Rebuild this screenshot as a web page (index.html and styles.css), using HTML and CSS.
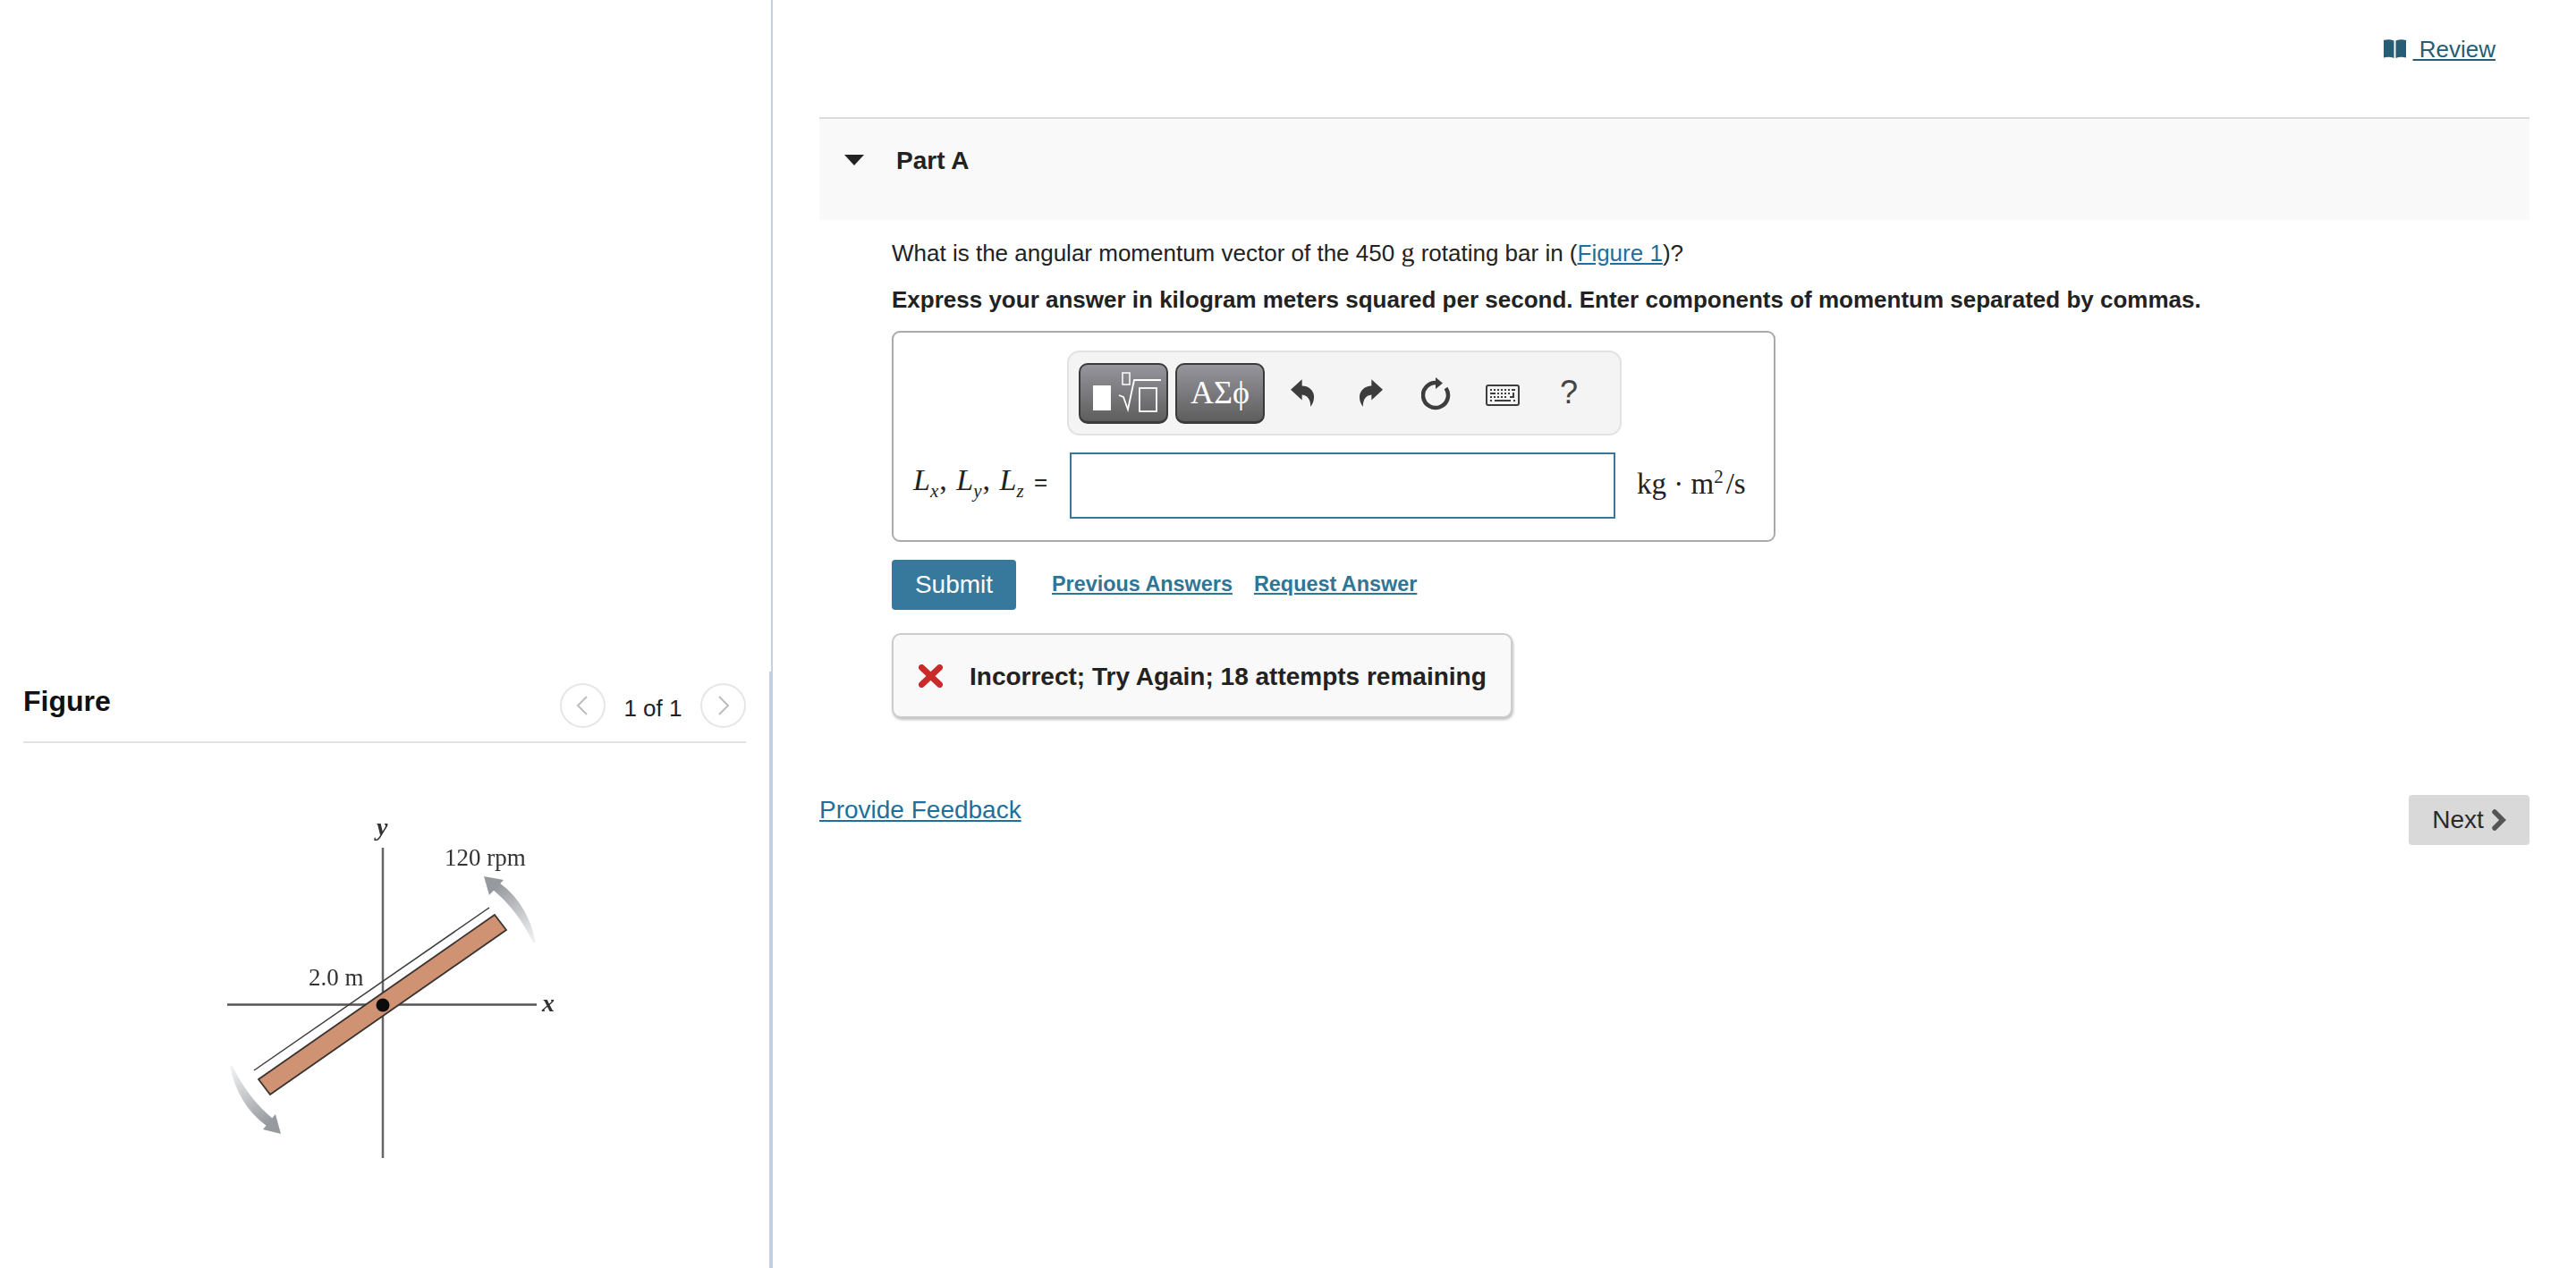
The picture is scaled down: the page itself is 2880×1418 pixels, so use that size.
FILE: index.html
```html
<!DOCTYPE html>
<html lang="en">
<head>
<meta charset="utf-8">
<title>Part A</title>
<link rel="stylesheet" href="styles.css">
</head>
<body>
<main class="page">
  <aside class="figure-pane">
    <div class="figure-region">
      <div class="figure-head">
        <h2 class="figure-title">Figure</h2>
        <div class="figure-nav">
          <button class="nav-btn" type="button" aria-label="Previous"><svg width="14" height="24" viewBox="0 0 14 24"><path d="M12 2 2 12l10 10" fill="none" stroke="#bdbdbd" stroke-width="2"/></svg></button>
          <span class="nav-count">1 of 1</span>
          <button class="nav-btn" type="button" aria-label="Next"><svg width="14" height="24" viewBox="0 0 14 24"><path d="M2 2l10 10L2 22" fill="none" stroke="#bdbdbd" stroke-width="2"/></svg></button>
        </div>
      </div>
      <svg class="diagram" width="400" height="410" viewBox="0 0 400 410">
        <defs>
          <linearGradient id="fadeUp" gradientUnits="userSpaceOnUse" x1="358" y1="155" x2="315" y2="90">
            <stop offset="0" stop-color="#f4f5f6"/><stop offset="1" stop-color="#96999d"/>
          </linearGradient>
          <linearGradient id="fadeDown" gradientUnits="userSpaceOnUse" x1="18" y1="291" x2="61" y2="356">
            <stop offset="0" stop-color="#f4f5f6"/><stop offset="1" stop-color="#96999d"/>
          </linearGradient>
        </defs>
        <line x1="188" y1="48" x2="188" y2="395" stroke="#666" stroke-width="2.5"/>
        <line x1="14" y1="223.500" x2="360" y2="223.500" stroke="#555" stroke-width="2.5"/>
        <line x1="44" y1="297" x2="307" y2="115" stroke="#3c3c3c" stroke-width="1.500"/>
        <polygon points="313,123 326,140 62,324 49,307" fill="#cf9272" stroke="#3a3330" stroke-width="1.800"/>
        <circle cx="188" cy="224" r="7.500" fill="#0c0c0c"/>
        <path d="M359 154Q350 110 318 87L311 95Q339 118 356 154Z" fill="url(#fadeUp)"/>
        <polygon points="301,80 323,84 307,101" fill="#96999d"/>
        <path d="M17 292Q26 336 58 359L65 351Q37 328 20 292Z" fill="url(#fadeDown)"/>
        <polygon points="74,368 68,346 54,363" fill="#96999d"/>
        <text class="fig-label fig-axis" x="181" y="34">y</text>
        <text class="fig-label" x="257" y="68">120 rpm</text>
        <text class="fig-label" x="105" y="202">2.0 m</text>
        <text class="fig-label fig-axis" x="366" y="231">x</text>
      </svg>
    </div>
  </aside>

  <section class="work-pane">
    <div class="review-row">
      <a class="review-link" href="#">
        <svg class="book" width="25" height="21" viewBox="0 0 25 21"><path d="M0 1C4-.2 8 0 11.500 1.500V21C8 19.500 4 19.500 0 20.500Z M13.500 1.500C17 0 21-.2 25 1V20.500C21 19.500 17 19.500 13.500 21Z" fill="#265e75"/></svg>
        <span class="review-text">&nbsp;Review</span>
      </a>
    </div>

    <header class="part-head">
      <span class="caret"></span>
      <h3 class="part-title">Part A</h3>
    </header>

    <div class="part-body">
      <p class="question">What is the angular momentum vector of the 450 <span class="unit-g">g</span> rotating bar in (<a href="#" class="fig-link">Figure 1</a>)?</p>
      <p class="instruction">Express your answer in kilogram meters squared per second. Enter components of momentum separated by commas.</p>

      <div class="answer-box">
        <div class="toolbar">
          <button class="tool-btn" type="button" aria-label="Templates">
            <svg width="96" height="64" viewBox="0 0 96 64"><rect x="14" y="24" width="20" height="28" fill="#fff"/><rect x="47" y="10" width="8" height="13" fill="none" stroke="#fff" stroke-width="1.500"/><path d="M43 35l5 2 5 14 7-33h30" fill="none" stroke="#fff" stroke-width="1.800"/><rect x="66" y="27" width="19" height="26" fill="none" stroke="#fff" stroke-width="1.800"/></svg>
          </button>
          <button class="tool-btn tool-greek" type="button">ΑΣϕ</button>
          <span class="tool-icon tool-undo"><svg width="26" height="31" viewBox="0 0 78 92"><path d="M0 35 38 0V22C62 22 80 40 78 62 78 74 72 86 66 92 68 74 60 54 38 52V70Z" fill="#3d3d3d"/></svg></span>
          <span class="tool-icon tool-redo"><svg width="26" height="31" viewBox="0 0 78 92"><path d="M78 35 40 0V22C16 22-2 40 0 62 0 74 6 86 12 92 10 74 18 54 40 52V70Z" fill="#3d3d3d"/></svg></span>
          <span class="tool-icon tool-reset"><svg width="33" height="37" viewBox="0 0 33 37"><path d="M17 6A14 14 0 1 0 27.500 12" fill="none" stroke="#3d3d3d" stroke-width="4.500"/><polygon points="16,0 24,6.500 16,13" fill="#3d3d3d"/></svg></span>
          <span class="tool-icon tool-keys"><svg width="38" height="24" viewBox="0 0 38 24"><rect x="1" y="1" width="36" height="22" rx="2" fill="none" stroke="#3d3d3d" stroke-width="2"/><path d="M5 6h2M9 6h2M13 6h2M17 6h2M21 6h2M25 6h2M29 6h4M5 10h6M13 10h2M17 10h2M21 10h2M25 10h2M31 9v5H27M5 14h2M9 14h2M13 14h2M17 14h2M21 14h2M5 18h2M10 18h18M31 18h2" stroke="#3d3d3d" stroke-width="2" fill="none"/></svg></span>
          <span class="tool-help">?</span>
        </div>
        <div class="answer-row">
          <span class="math-label"><i>L</i><sub>x</sub>, <i>L</i><sub>y</sub>, <i>L</i><sub>z</sub> <span class="equals">=</span></span>
          <input class="answer-input" type="text" aria-label="Answer">
          <span class="math-unit">kg · m<sup>2</sup><span class="slash">/</span>s</span>
        </div>
      </div>

      <div class="action-row">
        <button class="submit-btn" type="button">Submit</button>
        <a class="action-link" href="#">Previous Answers</a>
        <a class="action-link" href="#">Request Answer</a>
      </div>

      <div class="feedback-box">
        <svg class="feedback-x" width="27" height="26" viewBox="0 0 27 26"><path d="M3.500 3.500 23.500 22.500M23.500 3.500 3.500 22.500" stroke="#c92a2a" stroke-width="7" stroke-linecap="round"/></svg>
        <span class="feedback-text">Incorrect; Try Again; 18 attempts remaining</span>
      </div>
    </div>

    <footer class="pane-foot">
      <a class="feedback-link" href="#">Provide Feedback</a>
      <button class="next-btn" type="button">Next <svg width="16" height="24" viewBox="0 0 16 24"><path d="M3 3l9 9-9 9" fill="none" stroke="#555" stroke-width="5.500" stroke-linecap="round"/></svg></button>
    </footer>
  </section>
</main>
</body>
</html>
```

FILE: styles.css
```css
* { box-sizing: border-box; }
html, body { margin: 0; height: 100%; background: #fff; }
body { font-family: "Liberation Sans", Arial, sans-serif; color: #222; overflow: hidden; }
button { font-family: inherit; }
a { color: #2b7095; }

.page { display: flex; height: 1418px; }

.figure-pane { width: 864px; flex: none; padding-top: 751px; border-right: 2px solid #c3d0e0; }
.figure-region { height: 667px; padding: 0 26px; border-right: 2px solid #c3d0e0; }
.figure-head { display: flex; justify-content: space-between; align-items: flex-start; height: 80px; border-bottom: 2px solid #dfe1e3; }
.figure-title { margin: 13px 0 0; font-size: 32px; font-weight: 700; line-height: 40px; color: #111; }
.figure-nav { display: flex; align-items: flex-start; gap: 20.5px; margin-top: 13px; }
.nav-btn { width: 51px; height: 50px; padding: 0; border: 2px solid #e6e6e6; border-radius: 50%; background: #fff; display: flex; align-items: center; justify-content: center; }
.nav-count { margin-top: 13px; font-size: 26px; line-height: 30px; color: #222; }
.diagram { display: block; margin: 69px 0 0 214px; filter: blur(0.5px); }
.fig-label { font-family: "Liberation Serif", serif; font-size: 27px; fill: #333; }
.fig-axis { font-style: italic; font-size: 28px; font-weight: 700; }

.work-pane { flex: 1; padding: 0 52px; }
.review-row { height: 131px; display: flex; justify-content: flex-end; padding: 39px 38px 0 0; }
.review-link { display: flex; align-items: flex-start; height: 32px; color: #265e75; font-size: 26px; line-height: 32px; }
.book { margin-top: 5px; margin-right: 8px; }
.part-head { display: flex; align-items: center; height: 115px; background: #f9f9f9; border-top: 2px solid #dcdcdc; padding: 0 0 19px 28px; }
.caret { width: 0; height: 0; border-left: 11px solid transparent; border-right: 11px solid transparent; border-top: 12px solid #222; margin-top: -3px; }
.part-title { margin: 0 0 0 36px; font-size: 28px; font-weight: 700; color: #222; }

.part-body { padding: 20px 0 0 81px; }
.question { margin: 0; font-size: 26px; line-height: 34px; color: #222; }
.unit-g { font-family: "Liberation Serif", serif; font-size: 30px; line-height: 20px; }
.fig-link { color: #1f6f9c; }
.instruction { margin: 18px 0 0; font-size: 26px; line-height: 34px; font-weight: 700; color: #222; }

.answer-box { width: 988px; height: 236px; margin-top: 18px; padding: 20px 0 0 0; border: 2px solid #aaa; border-radius: 9px; }
.toolbar { display: flex; align-items: center; width: 620px; height: 95px; margin-left: 194px; padding-left: 11px; background: #f4f4f4; border: 2px solid #e2e2e2; border-radius: 14px; }
.tool-btn { width: 100px; height: 68px; margin-right: 8px; padding: 0; display: flex; align-items: center; justify-content: center; color: #fff; background: linear-gradient(#96959c, #5e5e5e); border: 2px solid #3a3a3a; border-bottom-width: 3px; border-radius: 10px; }
.tool-greek { font-family: "Liberation Serif", serif; font-size: 36px; }
.tool-icon { display: flex; }
.tool-undo { margin-left: 21px; }
.tool-redo { margin-left: 51px; }
.tool-reset { margin-left: 43px; margin-top: 2px; }
.tool-keys { margin-left: 39px; margin-top: 5px; }
.tool-help { margin: -2px 0 0 45px; font-size: 36px; color: #444; }

.answer-row { display: flex; align-items: center; margin-top: 19px; }
.math-label { width: 197px; margin-top: -6px; padding-left: 22px; font-family: "Liberation Serif", serif; font-size: 34px; word-spacing: 2px; white-space: nowrap; color: #222; }
.math-label sub { font-size: 21px; font-style: italic; letter-spacing: 1px; }
.equals { font-family: "Liberation Sans", sans-serif; font-size: 26px; }
.answer-input { width: 610px; height: 74px; border: 2px solid #37779a; background: #fff; padding: 0; }
.math-unit { margin: -6px 0 0 24px; font-family: "Liberation Serif", serif; font-size: 33px; white-space: nowrap; color: #222; }
.math-unit sup { font-size: 21px; }
.slash { margin-left: 3px; }

.action-row { display: flex; align-items: center; margin-top: 20px; }
.submit-btn { width: 139px; height: 56px; padding: 0; border: 0; border-radius: 4px; background: #37799c; color: #fff; font-size: 28px; }
.action-link { margin-top: -2px; font-size: 23.4px; font-weight: 700; color: #2f7596; }
.submit-btn + .action-link { margin-left: 40px; }
.action-link + .action-link { margin-left: 24px; }

.feedback-box { display: flex; align-items: center; width: 694px; height: 95px; margin-top: 26px; padding-left: 28px; background: #f9f9f9; border: 2px solid #ccc; border-radius: 10px; box-shadow: 1px 2px 3px rgba(0,0,0,.25); }
.feedback-text { margin: 3px 0 0 30px; font-size: 28px; font-weight: 700; color: #222; white-space: nowrap; }

.pane-foot { display: flex; justify-content: space-between; align-items: flex-start; margin-top: 86px; }
.feedback-link { font-size: 28px; line-height: 34px; color: #1f6f9c; }
.next-btn { display: flex; align-items: center; justify-content: center; gap: 9px; width: 135px; height: 56px; padding: 0; border: 0; border-radius: 4px; background: #d9d9d9; color: #2a2a2a; font-size: 28px; }
```
